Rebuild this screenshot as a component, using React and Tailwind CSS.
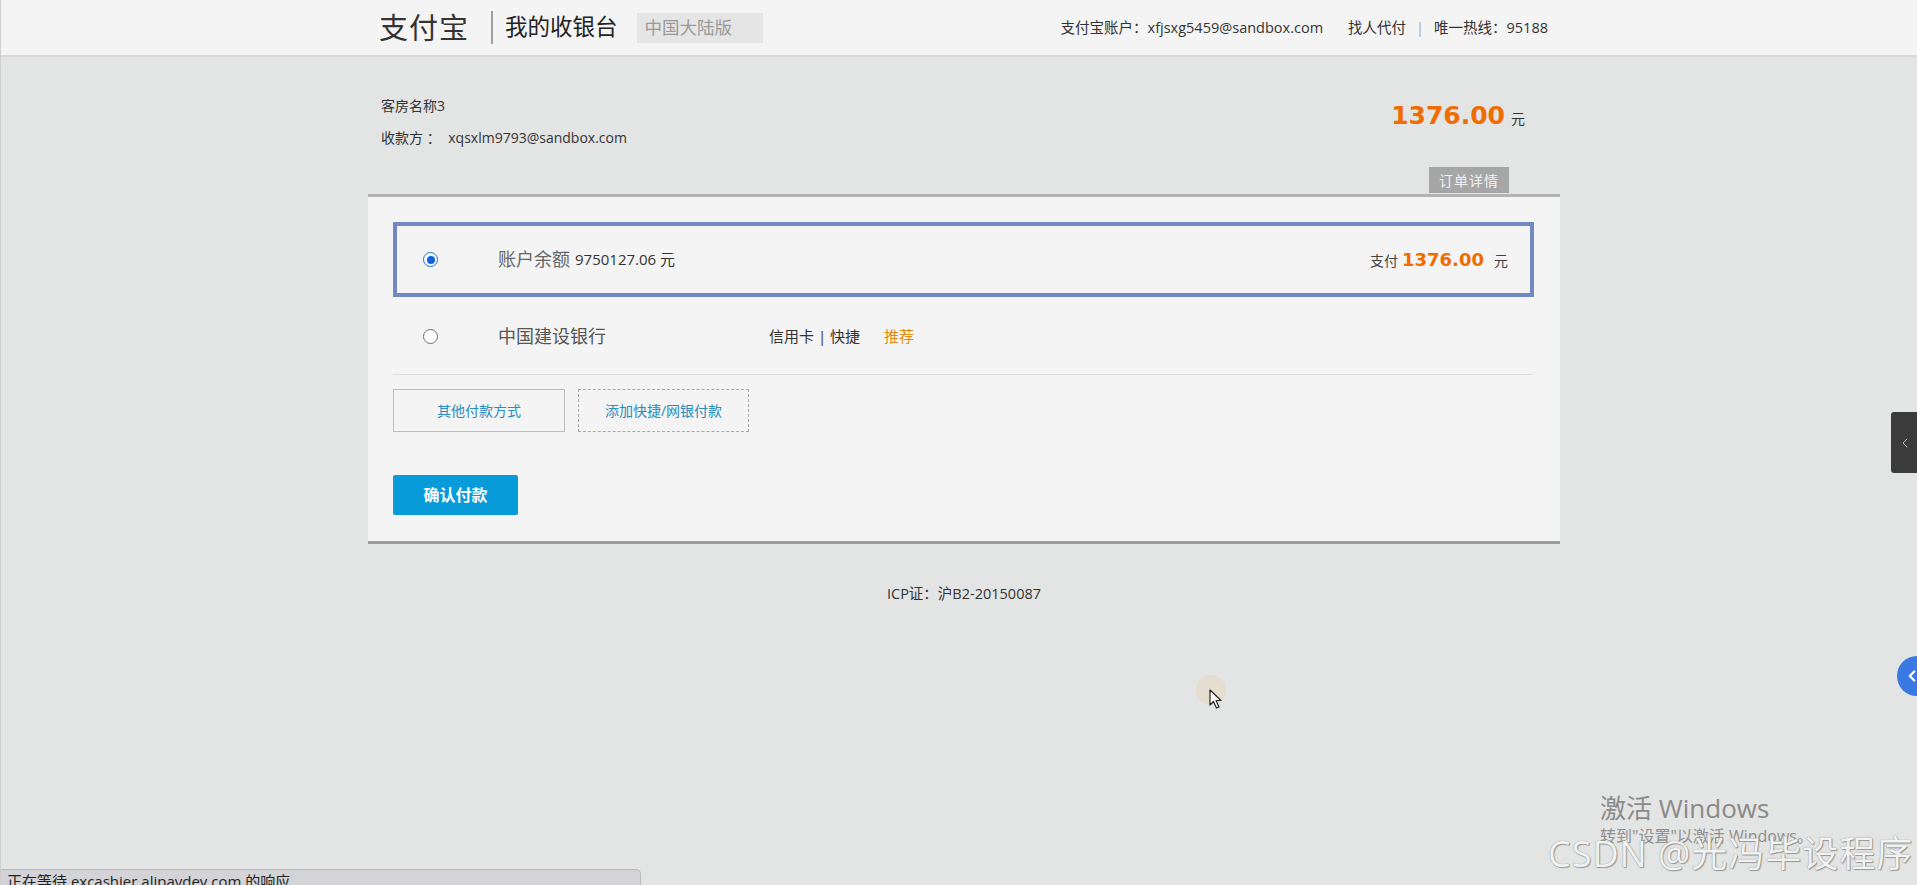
import { ChevronLeft } from 'lucide-react';

const font = "font-['Open_Sans','Noto_Sans_CJK_SC',sans-serif]";

function Radio({ checked }) {
  if (checked) {
    return (
      <span className="flex h-[15px] w-[15px] items-center justify-center rounded-full border border-[#1a6fd8] bg-white">
        <span className="h-[8px] w-[8px] rounded-full bg-[#0f62dd]" />
      </span>
    );
  }
  return <span className="h-[15px] w-[15px] rounded-full border-[1.5px] border-[#6f6f6f] bg-white" />;
}

function Header() {
  return (
    <header className="h-[57px] border-b-2 border-[#d9d9d9] bg-[#f4f4f4]">
      <div className="ml-[367px] flex h-full w-[1192px] items-center justify-between pl-[11px] pr-[12px]">
        <div className="flex items-center">
          <span className="text-[29px] leading-none tracking-[1px] text-[#333]">支付宝</span>
          <span className="ml-[22px] h-[33px] w-[2px] bg-[#a0a0a0]" />
          <span className="ml-[12px] text-[22.5px] leading-none text-[#222]">我的收银台</span>
          <span className="ml-[19px] flex h-[30px] w-[126px] items-center bg-[#e5e5e5] pl-[8px] text-[17.5px] text-[#9a9a9a]">
            中国大陆版
          </span>
        </div>
        <div className="flex items-center text-[14.5px] text-[#333]">
          <span>支付宝账户：xfjsxg5459@sandbox.com</span>
          <span className="ml-[25px]">找人代付</span>
          <span className="mx-[10px] text-[#aaa]">|</span>
          <span>唯一热线：95188</span>
        </div>
      </div>
    </header>
  );
}

function OrderInfo() {
  return (
    <div className="flex h-[137px] justify-between">
      <div className="pl-[13px] pt-[33px] text-[14px] leading-[32px] text-[#333]">
        <p>客房名称3</p>
        <p>
          收款方 ： <span className="ml-[4px]">xqsxlm9793@sandbox.com</span>
        </p>
      </div>
      <div className="flex flex-col items-end pr-[35px] pt-[40px]">
        <div className="flex h-[32px] items-baseline">
          <span className="font-['DejaVu_Sans',sans-serif] text-[25px] font-bold text-[#f06c00]">1376.00</span>
          <span className="ml-[6px] text-[14px] text-[#333]">元</span>
        </div>
        <button className="mr-[16px] mt-[38px] h-[26px] w-[80px] bg-[#a6a6a6] text-[14px] tracking-[1px] text-[#f1f1f1]">
          订单详情
        </button>
      </div>
    </div>
  );
}

function PayPanel() {
  return (
    <section className="border-b-[3px] border-t-[3px] border-b-[#9d9d9d] border-t-[#b3b3b3] bg-[#f4f4f4] pb-[26px] pl-[25px] pr-[26px] pt-[25px]">
      <div className="flex h-[75px] items-center border-4 border-[#7189c0] pr-[22px]">
        <div className="flex w-[101px] pl-[26px]">
          <Radio checked />
        </div>
        <span className="text-[18px] text-[#666]">账户余额</span>
        <span className="ml-[5px] text-[15px] text-[#333]">9750127.06 元</span>
        <div className="ml-auto flex items-baseline text-[14px] text-[#444]">
          <span>支付</span>
          <span className="ml-[4px] font-['DejaVu_Sans',sans-serif] text-[18px] font-bold text-[#f06c00]">1376.00</span>
          <span className="ml-[10px]">元</span>
        </div>
      </div>

      <div className="flex h-[78px] items-center border-b border-[#dedede] pl-[4px] pt-[2px]">
        <div className="flex w-[101px] pl-[26px]">
          <Radio />
        </div>
        <span className="w-[271px] text-[18px] text-[#555]">中国建设银行</span>
        <span className="text-[15px] text-[#333]">信用卡 | 快捷</span>
        <span className="ml-[24px] text-[15px] text-[#de8a12]">推荐</span>
      </div>

      <div className="mt-[14px] flex gap-[13px]">
        <button className="h-[43px] w-[172px] border border-[#bdbdbd] text-[14px] text-[#2a8cbf]">其他付款方式</button>
        <button className="h-[43px] w-[171px] border border-dashed border-[#aaa] text-[14px] text-[#2a8cbf]">
          添加快捷/网银付款
        </button>
      </div>

      <button className="mt-[43px] h-[40px] w-[125px] rounded-[2px] bg-[#079bd9] text-[16px] font-bold text-white">
        确认付款
      </button>
    </section>
  );
}

function Overlays() {
  return (
    <>
      <div className="absolute left-[1890px] top-[412px] flex h-[61px] w-[30px] items-center rounded-l-[3px] bg-[#3b3b3b] pl-[6px] text-[#b8b8b8]">
        <ChevronLeft size={16} strokeWidth={1.5} />
      </div>
      <div className="absolute left-[1896px] top-[656px] flex h-[40px] w-[40px] items-center rounded-full bg-[#3a78e4] pl-[6px] text-white">
        <ChevronLeft size={18} strokeWidth={3} />
      </div>

      <div className="absolute left-[1195px] top-[675px] h-[30px] w-[30px] rounded-full bg-[#e6dcc4]/70" />
      <svg className="absolute left-[1208px] top-[689px]" width="14" height="20" viewBox="0 0 14 20">
        <path d="M1 1 L1 16 L4.5 12.5 L7.5 19 L10 18 L7 11.5 L12 11.5 Z" fill="white" stroke="#222" strokeWidth="1.2" strokeLinejoin="round" />
      </svg>

      <div className="absolute left-[1599px] top-[793px] text-[26px] leading-[30px] text-[#8a8a8a]">激活 Windows</div>
      <div className="absolute left-[1599px] top-[826px] text-[16px] leading-[20px] text-[#8f8f8f]">转到"设置"以激活 Windows。</div>
      <div className="absolute left-[1547px] top-[831px] text-[36px] leading-[46px] tracking-[1px] text-[#f2f2f2] [text-shadow:0_0_1px_#777,1px_1px_1px_#999]">
        CSDN @光冯毕设程序
      </div>

      <div className="absolute left-0 top-[869px] h-[30px] w-[640px] rounded-tr-[5px] border-r border-t border-[#b9b9be] bg-[#d3d3d8] pl-[6px] pt-[1px] text-[15px] leading-[20px] text-[#222]">
        正在等待 excashier.alipaydev.com 的响应...
      </div>
    </>
  );
}

export default function App() {
  return (
    <div className={`relative h-[885px] w-[1917px] overflow-hidden border-l border-[#cfcfcf] bg-[#e3e4e4] ${font}`}>
      <Header />
      <main className="ml-[367px] w-[1192px]">
        <OrderInfo />
        <PayPanel />
        <p className="mt-[40px] text-center text-[14.5px] leading-[20px] text-[#333]">ICP证：沪B2-20150087</p>
      </main>
      <Overlays />
    </div>
  );
}
